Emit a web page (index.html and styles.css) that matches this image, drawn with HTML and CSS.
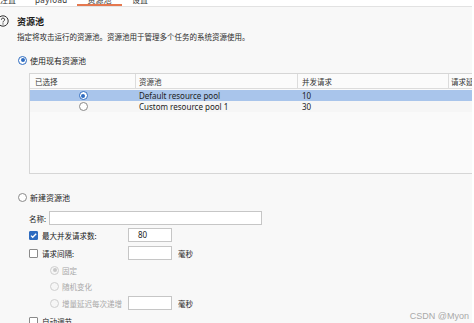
FILE: index.html
```html
<!DOCTYPE html>
<html lang="zh-CN">
<head>
<meta charset="utf-8">
<link rel="stylesheet" href="styles.css">
</head>
<body>
<div class="tabs">
  <span class="tab t1">注置</span>
  <span class="tab t2">payload</span>
  <span class="tab t3 active">资源池</span>
  <span class="tab t4">设置</span>
</div>
<div class="panel">
  <div class="heading">
    <svg class="help" width="12" height="12" viewBox="0 0 12 12"><circle cx="6" cy="6" r="5.2" fill="none" stroke="#333" stroke-width="1"/><path d="M4.4 4.7a1.6 1.6 0 1 1 2.3 1.4c-.5.3-.7.5-.7 1.1v.3" fill="none" stroke="#333" stroke-width="1"/><circle cx="6" cy="8.9" r=".6" fill="#333"/></svg>
    <span class="htext">资源池</span>
  </div>
  <div class="desc">指定将攻击运行的资源池。资源池用于管理多个任务的系统资源使用。</div>
  <div class="opt top1"><span class="radio on"></span><span>使用现有资源池</span></div>
  <div class="table">
    <div class="trow thead">
      <div class="c c1">已选择</div>
      <div class="c c2">资源池</div>
      <div class="c c3">并发请求</div>
      <div class="c c4">请求延</div>
    </div>
    <div class="trow sel">
      <div class="c c1 center"><span class="radio on small"></span></div>
      <div class="c c2">Default resource pool</div>
      <div class="c c3">10</div>
      <div class="c c4"></div>
    </div>
    <div class="trow alt">
      <div class="c c1 center"><span class="radio small"></span></div>
      <div class="c c2">Custom resource pool 1</div>
      <div class="c c3">30</div>
      <div class="c c4"></div>
    </div>
  </div>
  <div class="opt top2"><span class="radio"></span><span>新建资源池</span></div>
  <div class="frow r-name"><span class="flabel-n">名称:</span><span class="input wide"></span></div>
  <div class="frow r3"><span class="flabel"><span class="check on"><svg width="9" height="9" viewBox="0 0 9 9"><path d="M2 4.6l1.7 1.7L7.2 2.7" fill="none" stroke="#fff" stroke-width="1.3"/></svg></span>最大并发请求数:</span><span class="input">80</span></div>
  <div class="frow r3"><span class="flabel"><span class="check"></span>请求间隔:</span><span class="input"></span><span class="unit">毫秒</span></div>
  <div class="sub r4"><span class="radio dis on"></span><span>固定</span></div>
  <div class="sub r4"><span class="radio dis"></span><span>随机变化</span></div>
  <div class="frow sub-f r4"><span class="flabel-s"><span class="radio dis"></span>增量延迟每次递增</span><span class="input"></span><span class="unit">毫秒</span></div>
  <div class="frow r4"><span class="flabel"><span class="check"></span>自动调节</span></div>
  <div class="watermark">CSDN @Myon</div>
</div>
</body>
</html>
```
FILE: styles.css
```css
* { box-sizing: border-box; }
html, body { margin: 0; padding: 0; background: #fff; }
body {
  width: 474px; height: 323px; overflow: hidden;
  font-family: "Noto Sans", "Noto Sans CJK SC", sans-serif;
  font-size: 8px; color: #222;
}
.tabs {
  height: 7px; width: 472px; display: flex; overflow: hidden;
  border-bottom: 1px solid #e2e2e2;
}
.tab { font-size: 8px; line-height: 8px; margin-top: -4px; color: #333; height: 10px; flex: none; }
.t1 { width: 35px; }
.t2 { width: 42px; letter-spacing: 0.4px; }
.t3 { width: 45px; text-align: center; border-bottom: 2px solid #e5784f; height: 10px; }
.t4 { margin-left: 10px; }
.panel {
  width: 472px; height: 316px; background: #f8f8f8; position: relative;
  padding-top: 7px;
}
.heading { display: flex; align-items: center; height: 14px; }
.help { margin-left: -3px; }
.htext { margin-left: 8px; font-weight: bold; font-size: 9px; color: #1a1a1a; }
.desc { margin-top: 3px; height: 12px; line-height: 12px; padding-left: 17px; font-size: 7.5px; color: #2a2a2a; }
.opt { display: flex; align-items: center; height: 12px; padding-left: 18px; gap: 3px; }
.top1 { margin-top: 11px; }
.top2 { margin-top: 17px; }
.radio {
  width: 9px; height: 9px; border-radius: 50%; border: 1px solid #8a8a8a; background: #fff;
  display: inline-block; position: relative; flex: none;
}
.radio.on { border-color: #2f6cc0; }
.radio.on::after {
  content: ""; position: absolute; left: 1.5px; top: 1.5px; width: 4px; height: 4px; border-radius: 50%; background: #2f6cc0;
}
.radio.dis { border-color: #cfcfcf; background: #f6f6f6; }
.radio.dis.on::after { background: #c8c8c8; }
.table {
  margin-top: 7px; margin-left: 29px; width: 443px; height: 101px;
  border: 1px solid #d6d6d6; border-right: none; background: #fafafa;
  display: flex; flex-direction: column;
}
.trow { display: flex; height: 11px; align-items: center; }
.thead { height: 15px; background: #fbfbfb; border-bottom: 1px solid #dcdcdc; }
.c { height: 100%; display: flex; align-items: center; white-space: nowrap; overflow: hidden; font-size: 8px; }
.c1 { width: 106px; padding-left: 5px; }
.c2 { width: 162px; padding-left: 3px; }
.c3 { width: 151px; padding-left: 4px; }
.c4 { flex: 1; padding-left: 2px; }
.thead .c { border-right: 1px solid #dcdcdc; font-size: 7.5px; color: #333; }
.thead .c4 { border-right: none; }
.center { justify-content: center; padding-left: 0; }
.sel { background: #a9c5eb; margin-top: 1px; }
.alt { background: #f6f6f6; }
.frow { display: flex; align-items: center; height: 14px; padding-left: 29px; }
.r-name { margin-top: 8px; }
.r3 { margin-top: 3px; }
.r3 + .r3 { margin-top: 4px; }
.r4 { margin-top: 4px; }
.flabel-n { width: 20px; font-size: 7.5px; }
.flabel { width: 99px; display: flex; align-items: center; gap: 4px; font-size: 7.5px; }
.input {
  height: 14px; width: 44px; border: 1px solid #c6c6c6; background: #fff;
  font-size: 8px; padding-left: 9px; line-height: 12px;
}
.input.wide { width: 213px; }
.check {
  width: 9px; height: 9px; border: 1px solid #8a8a8a; background: #fff; border-radius: 1px;
  display: inline-flex; flex: none;
}
.check.on { background: #2f6cc0; border-color: #2f6cc0; }
.check svg { margin: -1px; }
.unit { margin-left: 6px; font-size: 7.5px; }
.sub { display: flex; align-items: center; height: 12px; padding-left: 50px; gap: 3px; color: #a8a8a8; font-size: 7.5px; }
.sub-f { padding-left: 50px; }
.flabel-s { width: 78px; display: flex; align-items: center; gap: 3px; color: #a8a8a8; font-size: 7.5px; }
.watermark {
  position: absolute; right: 3px; bottom: 2px; font-family: "Liberation Sans", sans-serif;
  font-size: 9px; color: #a9a9a9;
}
```
